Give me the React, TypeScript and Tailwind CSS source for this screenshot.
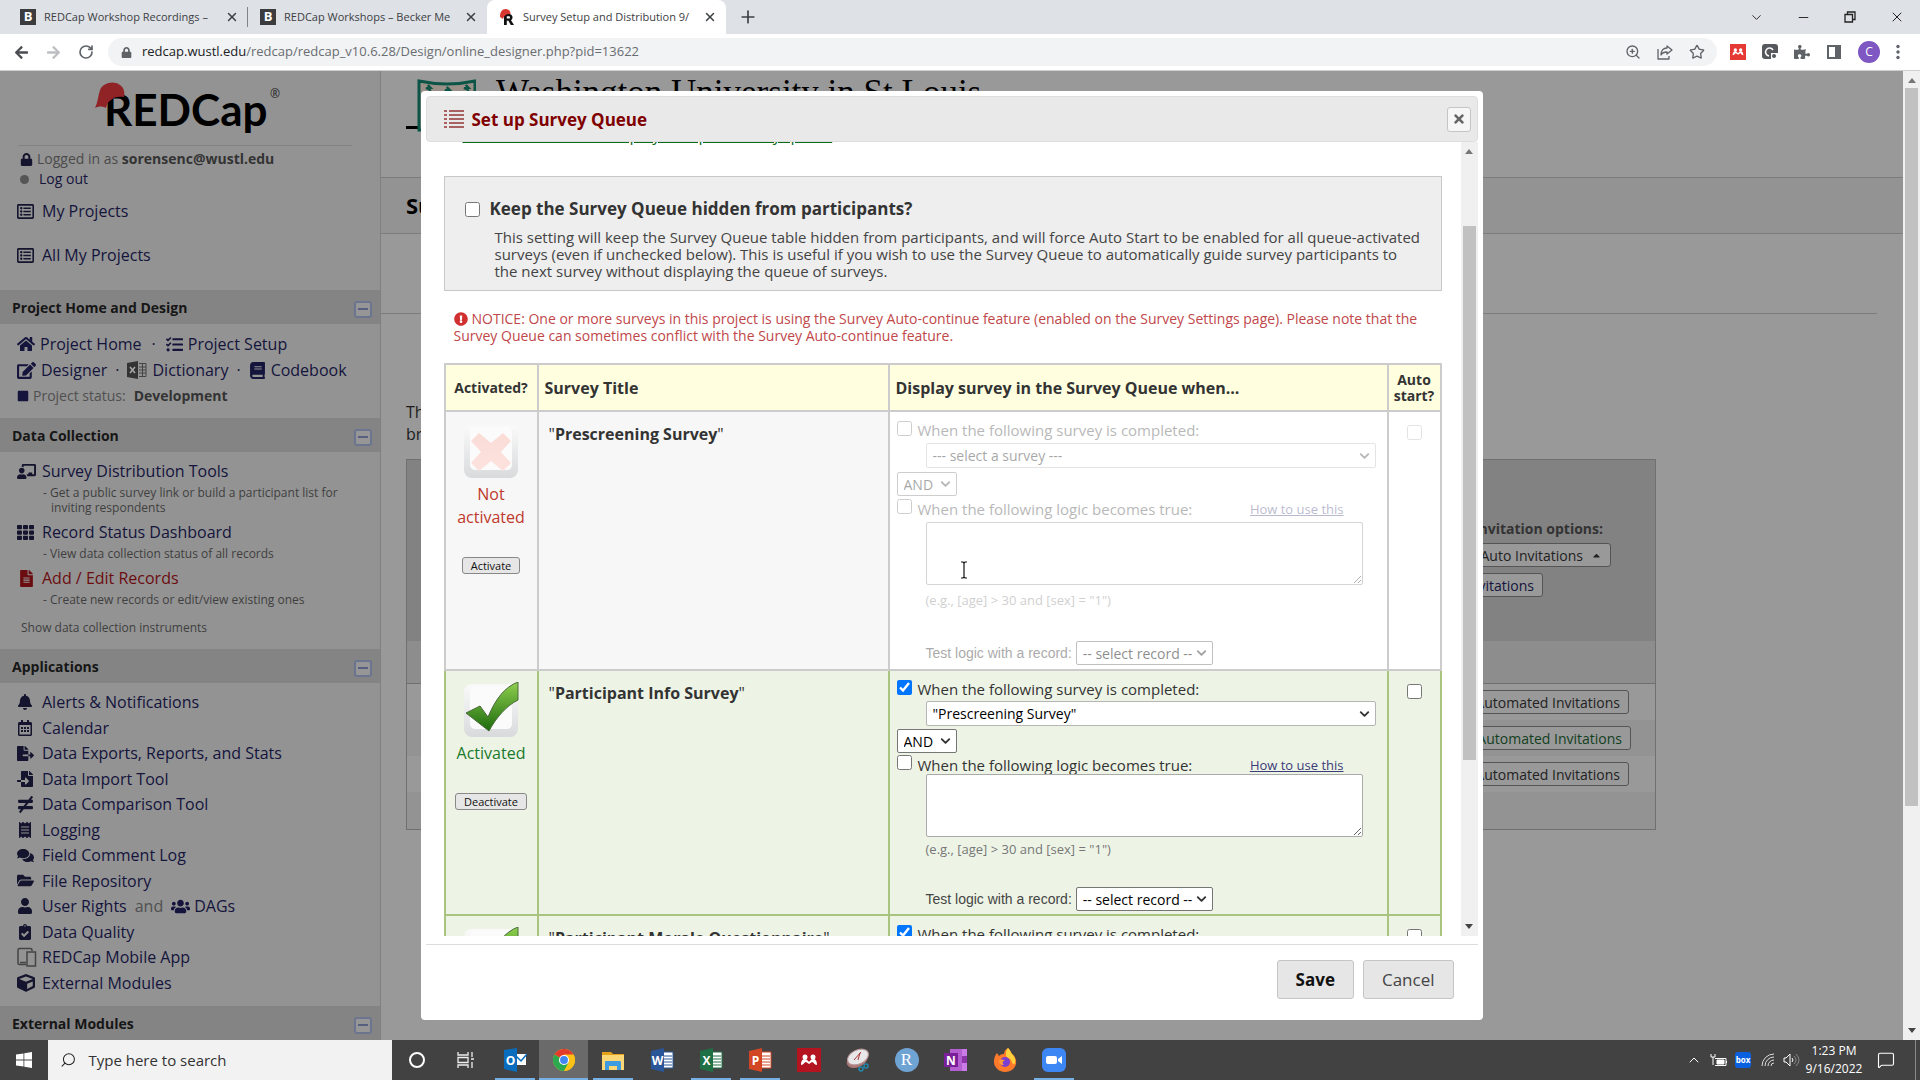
import React from "react";
import {
  FaArrowLeft, FaArrowRight, FaBell, FaBook, FaCaretUp, FaChalkboardTeacher, FaClipboardCheck, FaComments, FaCube, FaEdit,
  FaExclamationCircle, FaFileAlt, FaFileExport, FaFileImport, FaFolderOpen, FaHome, FaLock, FaNotEqual, FaPlus,
  FaPuzzlePiece, FaReceipt, FaRegCalendarAlt, FaRegListAlt, FaSquare, FaTasks, FaTh, FaTimes, FaUser, FaUsers,
} from "react-icons/fa";
import { ChevronDown, ChevronUp, Minus, MessageSquare, Plus, RotateCw, Search, Star, X, ZoomIn } from "lucide-react";

/* ---------- Browser frame ---------- */

function BeckerIcon() {
  return (
    <span className="flex h-4 w-4 shrink-0 items-center justify-center bg-[#3c3c3e] text-[13px] font-bold text-white">B</span>
  );
}

function RedCapIcon() {
  return (
    <svg viewBox="0 0 16 18" className="h-[18px] w-4 shrink-0">
      <path d="M5 6h5.5a3.4 3.4 0 0 1 1.5 6.2L15 17h-3.2l-2.4-4.2H7.8V17H5z M7.8 8.2v2.4h2c1.600 0 1.600-2.400 0-2.400z" fill="#111" fillRule="evenodd" />
      <path d="M1 9C1 4 3 1 6.500 1 10 1 11.500 3 11.500 6 8 5.500 5 7 4 11z" fill="#d9372f" />
    </svg>
  );
}

function Tab({ icon, title, active, divider }: { icon: React.ReactNode; title: string; active?: boolean; divider?: boolean }) {
  return (
    <div className={`flex h-full items-center ${divider ? "w-[248px] pl-5" : "w-[239px] pl-3"} ${active ? "rounded-t-lg bg-white" : ""}`}>
      {icon}
      <span className="ml-2 text-[11px] whitespace-nowrap text-[#3c4043]">{title}</span>
      <button aria-label="Close tab" className={`ml-auto text-[#3c4043] ${divider ? "mr-2" : "mr-[9px]"}`}><X size={14} strokeWidth={2.5} /></button>
      {divider && <span className="h-5 w-px bg-[#808389]" />}
    </div>
  );
}

function ShareIcon() {
  return (
    <svg viewBox="0 0 16 16" className="size-4" fill="none" stroke="currentColor" strokeWidth="1.300" strokeLinejoin="round">
      <path d="M1 5v10h11v-3" />
      <path d="M10 2l5 4-5 4V8c-3 0-5 1-6 3 0-4 2-7 6-7z" />
    </svg>
  );
}

function BrowserChrome() {
  return (
    <header className="shrink-0">
      <div className="flex h-[34px] items-center bg-[#dee1e6]">
        <Tab icon={<BeckerIcon />} title="REDCap Workshop Recordings –" divider />
        <Tab icon={<BeckerIcon />} title="REDCap Workshops – Becker Me" />
        <Tab icon={<RedCapIcon />} title="Survey Setup and Distribution 9/" active />
        <button aria-label="New tab" className="ml-3 text-[#3c4043]"><Plus size={20} /></button>
        <div className="ml-auto flex items-center gap-8 pr-[15px] text-[#222]">
          <ChevronDown size={15} strokeWidth={1.5} />
          <Minus size={15} strokeWidth={1.5} />
          <svg viewBox="0 0 14 14" className="size-[14px]" fill="none" stroke="currentColor" strokeWidth="1.300">
            <path d="M2 4.500h7.500V12H2z M4.500 4.500V2H12v7.500H9.500" />
          </svg>
          <X size={16} strokeWidth={1.5} />
        </div>
      </div>
      <div className="flex h-[37px] items-center border-b border-[#cfcfcf] bg-white text-[#5f6368]">
        <button aria-label="Back" className="ml-[14px]"><FaArrowLeft size={15} className="text-[#4a4d51]" /></button>
        <button aria-label="Forward" className="ml-[17px]"><FaArrowRight size={15} className="text-[#bdbfc2]" /></button>
        <button aria-label="Reload" className="ml-[17px]"><RotateCw size={16} strokeWidth={2.5} /></button>
        <div className="ml-[14px] flex h-7 flex-1 items-center rounded-full bg-[#f1f3f4] px-3">
          <FaLock size={11} className="ml-px" />
          <span className="ml-[10px] flex-1 text-[13px] text-[#6a6d72]">
            <span className="text-[#202124]">redcap.wustl.edu</span>/redcap/redcap_v10.6.28/Design/online_designer.php?pid=13622
          </span>
          <span className="flex items-center gap-4"><ZoomIn size={16} /><ShareIcon /><Star size={16} /></span>
        </div>
        <div className="flex items-center gap-4 pr-5 pl-[13px]">
          <MendeleyIcon small />
          <svg viewBox="0 0 16 16" className="size-4"><rect width="16" height="15" rx="3" fill="#55585c" /><path d="M11 6A4 4 0 1 0 7 12" fill="none" stroke="#fff" strokeWidth="1.500" /><path d="M9 9h7v6H9z" fill="#fff" /><circle cx="12" cy="12" r="2" fill="#55585c" /></svg>
          <FaPuzzlePiece size={16} />
          <svg viewBox="0 0 16 16" className="size-4"><path d="M1 1h14v14H1z M3 3v10h6V3z" fill="currentColor" fillRule="evenodd" /></svg>
          <span className="flex size-[22px] items-center justify-center rounded-full bg-[#7e57c2] text-[12px] text-white">C</span>
          <svg viewBox="0 0 4 16" className="h-4 w-1" fill="currentColor"><circle cx="2" cy="2.500" r="1.700" /><circle cx="2" cy="8" r="1.700" /><circle cx="2" cy="13.500" r="1.700" /></svg>
        </div>
      </div>
    </header>
  );
}

/* ---------- Sidebar ---------- */

function Logo() {
  return (
    <div className="relative ml-[104px] h-[54px] w-[176px]">
      <span className="font-['Lato'] text-[44px] leading-[54px] font-bold text-black">REDCap</span>
      <span className="absolute top-1 right-0 text-[12px] leading-4 text-[#222]">®</span>
      <svg viewBox="0 0 32 28" className="absolute top-0 -left-[9px] h-7 w-8">
        <path d="M0 26C3 20 3 14 5 8 8 1 18-2 25 3c4 3 5 7 4 12-6-1-10 0-13 3-3 2-4 4-5 8-4-2-7-2-11 0z" fill="#8f2326" />
      </svg>
    </div>
  );
}

function SectionHeader({ title }: { title: string }) {
  return (
    <div className="flex h-[34px] shrink-0 items-center justify-between bg-[#848484] pr-2 pl-3">
      <h2 className="text-[14px] font-bold text-[#161616]">{title}</h2>
      <button aria-label={`Collapse ${title}`} className="mt-1 flex h-[17px] w-[18px] items-center justify-center rounded-[3px] border-2 border-[#6c7590] bg-[#969696]">
        <span className="h-[2px] w-[10px] bg-[#565f80]" />
      </button>
    </div>
  );
}

function NavLink({ icon, children }: { icon: React.ReactNode; children: React.ReactNode }) {
  return (
    <a href="#" className="flex items-center text-[16px] leading-[22px] whitespace-nowrap text-[#14143c]">
      <span className="flex w-[25px] shrink-0 text-[#14142e]">{icon}</span>
      {children}
    </a>
  );
}

const apps: { icon: React.ReactNode; label: string }[] = [
  { icon: <FaBell size={16} />, label: "Alerts & Notifications" },
  { icon: <FaRegCalendarAlt size={16} />, label: "Calendar" },
  { icon: <FaFileExport size={17} />, label: "Data Exports, Reports, and Stats" },
  { icon: <FaFileImport size={16} />, label: "Data Import Tool" },
  { icon: <FaNotEqual size={17} />, label: "Data Comparison Tool" },
  { icon: <FaReceipt size={16} />, label: "Logging" },
  { icon: <FaComments size={17} />, label: "Field Comment Log" },
  { icon: <FaFolderOpen size={17} />, label: "File Repository" },
  { icon: <FaUser size={16} />, label: "User Rights" },
  { icon: <FaClipboardCheck size={16} />, label: "Data Quality" },
  { icon: <MobileIcon />, label: "REDCap Mobile App" },
  { icon: <FaCube size={18} />, label: "External Modules" },
];

function MobileIcon() {
  return (
    <svg viewBox="0 0 20 20" className="size-5" fill="none" stroke="#444" strokeWidth="1.500">
      <path d="M9 17.500H2.500q-1.500 0-1.500-1.500V3q0-1.500 1.500-1.500h11Q15 1.500 15 3v1M10 5h8.500v14H10z M3 15.500h6" />
    </svg>
  );
}

function ExcelGray() {
  return (
    <svg viewBox="0 0 20 18" className="h-[18px] w-5">
      <path d="M0 2l11-2v18L0 16z" fill="#333" />
      <path d="M12 2.500h7v13h-7 M12 6h7 M12 9h7 M12 12h7 M15.500 2.500v13" fill="none" stroke="#444" />
      <path d="M3 6l5 6 M8 6l-5 6" stroke="#aaa" strokeWidth="1.500" />
    </svg>
  );
}

function Note({ children }: { children: React.ReactNode }) {
  return <p className="mt-[3px] pl-[51px] -indent-2 text-[12px] leading-[15px] text-[#3f3f3f]">{children}</p>;
}

function Sidebar() {
  return (
    <nav className="flex w-[381px] shrink-0 flex-col border-r border-[#808080] bg-[#939393]">
      <div className="h-[219px] shrink-0 pt-[11px]">
        <Logo />
        <div className="mt-[9px] mr-7 ml-[18px] border-t border-[#828282]" />
        <div className="pt-[3px] pl-5 text-[14px] leading-5 text-[#4b4b4b]">
          <div className="flex items-center gap-1">
            <FaLock size={13} className="text-[#14142e]" />
            <span>Logged in as <b className="text-[#333]">sorensenc@wustl.edu</b></span>
          </div>
          <div className="flex items-center gap-[10px]">
            <span className="size-[9px] rounded-full bg-[#555]" />
            <a href="#" className="text-[#14143c]">Log out</a>
          </div>
        </div>
        <div className="flex flex-col gap-[22px] pt-[11px] pl-[17px]">
          <NavLink icon={<FaRegListAlt size={17} />}>My Projects</NavLink>
          <NavLink icon={<FaRegListAlt size={17} />}>All My Projects</NavLink>
        </div>
      </div>
      <SectionHeader title="Project Home and Design" />
      <div className="flex h-[94px] shrink-0 flex-col gap-1 pt-[9px] pl-[17px] text-[#14143c]">
        <div className="flex items-center gap-[10px] text-[16px] leading-[22px]">
          <a href="#" className="flex items-center gap-[5px]"><FaHome size={18} />Project Home</a>
          <span>·</span>
          <a href="#" className="flex items-center gap-[5px]"><FaTasks size={17} />Project Setup</a>
        </div>
        <div className="flex items-center gap-2 text-[16px] leading-[22px]">
          <a href="#" className="flex items-center gap-[5px]"><FaEdit size={19} />Designer</a>
          <span>·</span>
          <a href="#" className="flex items-center gap-[5px]"><ExcelGray />Dictionary</a>
          <span>·</span>
          <a href="#" className="flex items-center gap-[5px]"><FaBook size={17} />Codebook</a>
        </div>
        <div className="flex items-center gap-1 text-[14px] leading-[22px] text-[#505050]">
          <FaSquare size={12} className="text-[#14143c]" />Project status: <b className="ml-1 text-[#333]">Development</b>
        </div>
      </div>
      <SectionHeader title="Data Collection" />
      <div className="h-[197px] shrink-0 pt-2">
        <div className="pl-[17px]"><NavLink icon={<FaChalkboardTeacher size={19} />}>Survey Distribution Tools</NavLink></div>
        <Note>- Get a public survey link or build a participant list for inviting respondents</Note>
        <div className="pt-[6px] pl-[17px]"><NavLink icon={<FaTh size={17} />}>Record Status Dashboard</NavLink></div>
        <Note>- View data collection status of all records</Note>
        <div className="pt-[6px] pl-[20px]">
          <a href="#" className="flex items-center gap-[9px] text-[16px] leading-[22px] text-[#6b0d10]"><FaFileAlt size={17} className="w-[13px]" />Add / Edit Records</a>
        </div>
        <Note>- Create new records or edit/view existing ones</Note>
        <button className="mt-[13px] ml-[21px] text-[12px] leading-4 text-[#3f3f3f]">Show data collection instruments</button>
      </div>
      <SectionHeader title="Applications" />
      <ul className="flex min-h-0 flex-1 flex-col justify-between pt-2 pb-3 pl-[17px]">
        {apps.map((a) => (
          <li key={a.label} className="flex gap-2 text-[16px] leading-[22px] text-[#505050]">
            <NavLink icon={a.icon}>{a.label}</NavLink>
            {a.label === "User Rights" && (
              <>
                and
                <a href="#" className="flex items-center gap-1 text-[#14143c]"><FaUsers size={19} />DAGs</a>
              </>
            )}
          </li>
        ))}
      </ul>
      <SectionHeader title="External Modules" />
    </nav>
  );
}

/* ---------- Page behind the dialog ---------- */

function GrayButton({ children, tone }: { children: React.ReactNode; tone: string }) {
  return (
    <button className={`flex h-6 items-center gap-2 rounded-[3px] border border-[#555] bg-[#999] px-2 text-[14px] ${tone}`}>{children}</button>
  );
}

function PageBehind() {
  return (
    <main className="min-w-0 flex-1 bg-[#999]">
      <div className="flex h-[107px] gap-5 border-b border-[#7c7c7c] pt-2 pl-[25px]">
        <svg viewBox="0 0 70 60" className="h-[60px] w-[70px]">
          <path d="M0 47h14v3H0z" fill="#000" />
          <path d="M13 2q28 6 56 0v49H13z" fill="#9a9088" stroke="#0c5546" strokeWidth="3" />
          <path d="M22 6l2 5-4-2h5zM41 8l2 5-4-2h5zM60 6l2 5-4-2h5z" stroke="#0c5546" strokeWidth="2" />
        </svg>
        <p className="-mt-2 font-['Liberation_Serif'] text-[35px] leading-[44px] font-normal text-black">Washington University in St.Louis</p>
      </div>
      <h1 className="flex h-14 items-center border-b border-[#7c7c7c] bg-[#939393] pl-[25px] text-[22px] font-bold text-black">Survey</h1>
      <div className="mr-[26px] h-20 border-b border-[#7c7c7c]" />
      <p className="h-[145px] pt-[87px] pl-[25px] text-[16px] leading-[22px] text-[#1c1c1c]">
        The
        <br />
        browser.
      </p>
      <div className="mr-[247px] ml-[25px] border border-[#707070]">
        <div className="flex h-[181px] flex-col items-end bg-[#828282] pt-[58px] pr-[44px]">
          <p className="pr-2 text-[14px] leading-[22px] font-bold text-[#333]">Invitation options:</p>
          <div className="mt-[3px]"><GrayButton tone="text-[#222]">Auto Invitations <FaCaretUp size={11} /></GrayButton></div>
          <div className="mt-[6px] mr-[68px]"><GrayButton tone="text-[#14143c]">Invitations</GrayButton></div>
        </div>
        <div className="h-[43px] border-b border-[#707070] bg-[#8d8d8d]" />
        <div className="flex h-9 items-center justify-end pr-[26px]"><GrayButton tone="text-[#222]">Automated Invitations</GrayButton></div>
        <div className="flex h-9 items-center justify-end bg-[#939393] pr-6"><GrayButton tone="text-[#12401f]">Automated Invitations</GrayButton></div>
        <div className="flex h-9 items-center justify-end pr-[26px]"><GrayButton tone="text-[#222]">Automated Invitations</GrayButton></div>
        <div className="h-[37px] bg-[#939393]" />
      </div>
    </main>
  );
}

/* ---------- Dialog ---------- */

function Select({ id, label, value, className, border }: { id: string; label: string; value: string; className: string; border: string }) {
  return (
    <span className={`relative inline-flex ${className}`}>
      <select id={id} aria-label={label} defaultValue={value} className={`size-full appearance-none rounded-[2px] border bg-white pr-4 pl-[6px] text-[14px] text-black ${border}`}>
        <option>{value}</option>
      </select>
      <ChevronDown size={15} strokeWidth={3} className="pointer-events-none absolute top-1/2 right-1 -translate-y-1/2" />
    </span>
  );
}

function Check({ id, label, checked }: { id: string; label?: string; checked?: boolean }) {
  return <input id={id} type="checkbox" aria-label={label} defaultChecked={checked} className="m-0 size-[15px] shrink-0 accent-[#0075ff]" />;
}

function TextCursor() {
  return (
    <svg viewBox="0 0 8 18" className="absolute top-[39px] left-[34px] h-[18px] w-2" fill="none" stroke="#111" strokeWidth="1.200">
      <path d="M1 1h2l1 1 1-1h2M1 17h2l1-1 1 1h2M4 2v14" />
    </svg>
  );
}

function QueueIcon() {
  return (
    <svg viewBox="0 0 20 18" className="h-[18px] w-5" stroke="#a86262" strokeWidth="2">
      <path d="M0 1h3M5 1h15M0 5h3M5 5h15M0 9h3M5 9h15M0 13h3M5 13h15M0 17h3M5 17h15" />
    </svg>
  );
}

function Conditions({ id, survey, on }: { id: string; survey: string; on: boolean }) {
  const fade = on ? "" : "opacity-35";
  return (
    <div className={`pt-[9px] pl-[7px] ${on ? "pb-[3px]" : "pb-1"}`}>
      <div className={`flex items-start gap-[6px] ${fade} ${on ? "h-[21px]" : "h-[22px]"}`}>
        <Check id={`${id}-done`} checked={on} />
        <label htmlFor={`${id}-done`} className="text-[15px] leading-[19px]">When the following survey is completed:</label>
      </div>
      <Select id={`${id}-survey`} label="Survey" value={survey} border="border-[#b5b5b5]" className={`ml-[29px] h-[25px] w-[450px] ${fade}`} />
      <div className={`flex ${fade} ${on ? "mt-[3px]" : "mt-1"}`}>
        <Select id={`${id}-op`} label="Operator" value="AND" border="border-[#767676]" className="h-6 w-[60px]" />
      </div>
      <div className={`flex items-start gap-[6px] ${fade} ${on ? "mt-[2px] h-[19px]" : "mt-[3px] h-[23px]"}`}>
        <Check id={`${id}-true`} />
        <label htmlFor={`${id}-true`} className="text-[15px] leading-5">When the following logic becomes true:</label>
        <a href="#" className="mr-[43px] ml-auto text-[13px] leading-[21px] text-[#3c3c78] underline">How to use this</a>
      </div>
      <div className="relative ml-[29px] flex">
        <textarea aria-label="Logic" className={`h-[63px] w-[437px] resize rounded-[2px] border border-[#aaa] bg-white ${on ? "" : "opacity-50"}`} />
        {!on && <TextCursor />}
      </div>
      <p className={`ml-[29px] text-[13px] leading-4 text-[#777] ${fade} ${on ? "mt-1" : "mt-[7px]"}`}>(e.g., [age] &gt; 30 and [sex] = "1")</p>
      <div className={`ml-[29px] flex items-center gap-1 ${on ? "mt-[30px]" : "mt-[33px] opacity-45"}`}>
        <label htmlFor={`${id}-rec`} className="font-['Liberation_Sans'] text-[14px] text-[#444]">Test logic with a record:</label>
        <Select id={`${id}-rec`} label="Record" value="-- select record --" border="border-[#767676]" className="h-6 w-[137px]" />
      </div>
    </div>
  );
}

function StateIcon({ on }: { on: boolean }) {
  const g = on ? "tick-green" : "cross-red";
  return (
    <svg viewBox="0 0 56 56" className="mx-auto h-14 w-14">
      <defs>
        <linearGradient id={g} x1="0" y1="0" x2="0" y2="1"><stop offset="0" stopColor={on ? "#8fd04f" : "#fbdcd7"} /><stop offset="1" stopColor={on ? "#1c6a0c" : "#fce2de"} /></linearGradient>
        <linearGradient id={`${g}-b`} x1="0" y1="0" x2="0" y2="1"><stop offset="0" stopColor="#fafafa" /><stop offset="1" stopColor="#d8dadc" /></linearGradient>
      </defs>
      <rect x="1" y="2" width="54" height="53" rx="8" fill={`url(#${g}-b)`} />
      <rect x="7" y="4" width="42" height="43" rx="5" fill="#fbfbfb" />
      {on ? (
        <path d="M3 31l14-7 8 11C33 16 42 5 55 0v18C43 24 33 36 26 49z" fill={`url(#${g})`} stroke="#4c6a3c" />
      ) : (
        <path d="M16 10l12 10 12-10 8 8-10 11 10 11-8 8-12-10-12 10-8-8 10-11L8 18z" fill={`url(#${g})`} />
      )}
    </svg>
  );
}

function SurveyRow({ id, title, survey, on }: { id: string; title: string; survey: string; on: boolean }) {
  const cell = on ? "border-2 border-[#a9c47f] bg-[#edf4e6] align-top" : "border-2 border-[#ccc] align-top";
  return (
    <tr>
      <td className={`${cell} text-center ${on ? "" : "bg-[#f7f7f7]"}`}>
        <div className="flex flex-col items-center pt-[11px]">
          <StateIcon on={on} />
          <span className={`mt-1 text-[16px] leading-[23px] ${on ? "text-[#1a7a2a]" : "text-[#c0392b]"}`}>{on ? "Activated" : "Not activated"}</span>
          <button className="mt-7 rounded-[3px] border border-[#888] bg-[#e6e6e6] px-2 text-[11px] leading-[15px] text-[#111]">{on ? "Deactivate" : "Activate"}</button>
        </div>
      </td>
      <td className={`${cell} pt-[10px] pl-[10px] text-[16px] ${on ? "" : "bg-[#f7f7f7]"}`}>"<b>{title}</b>"</td>
      <td className={cell}><Conditions id={id} survey={survey} on={on} /></td>
      <td className={`${cell} text-center`}>
        <div className={`flex justify-center pt-[13px] ${on ? "" : "opacity-20"}`}><Check id={`${id}-auto`} label={`Auto start ${title}`} /></div>
      </td>
    </tr>
  );
}

function Dialog() {
  return (
    <section role="dialog" aria-label="Set up Survey Queue" className="flex h-full w-full max-w-[1062px] flex-col rounded-[4px] bg-white p-[5px] text-[#333]">
      <div className="flex h-[46px] shrink-0 items-center rounded-[4px] border border-[#ddd] bg-[#e9e9e9] pr-[6px] pl-[17px]">
        <QueueIcon />
        <h2 className="ml-2 flex-1 pt-px text-[17px] font-bold text-[#800000]">Set up Survey Queue</h2>
        <button aria-label="Close" className="flex h-[25px] w-6 items-center justify-center rounded-[3px] border border-[#c5c5c5] bg-[#f6f6f6] text-[#666]"><FaTimes size={14} /></button>
      </div>
      <div className="flex min-h-0 flex-1">
        <div className="min-w-0 flex-1 overflow-hidden pr-[19px] pl-[18px]">
          <a href="#" className="-mt-[19px] flex items-center gap-px pl-[10px] text-[16px] leading-6 text-[#0a6b1a]">
            <FaPlus size={8} /><span className="underline">Add custom text to display at top of survey queue</span>
          </a>
          <div className="mt-[29px] h-[115px] border border-[#c8c8c8] bg-[#eee] pt-[21px] pl-5">
            <div className="flex items-center gap-[10px]">
              <Check id="hide-queue" />
              <label htmlFor="hide-queue" className="text-[17px] leading-[22px] font-bold">Keep the Survey Queue hidden from participants?</label>
            </div>
            <p className="mt-[9px] pr-5 pl-[30px] text-[15px] leading-[17px] text-[#444]">
              This setting will keep the Survey Queue table hidden from participants, and will force Auto Start to be enabled for all queue-activated surveys (even if unchecked below). This is useful if you wish to use the Survey Queue to automatically guide survey participants to the next survey without displaying the queue of surveys.
            </p>
          </div>
          <p className="mt-[19px] px-[10px] text-[14px] leading-[17px] text-[#c0474a]">
            <FaExclamationCircle size={14} className="mr-1 inline-block align-[-2px] text-[#d03030]" />
            NOTICE: One or more surveys in this project is using the Survey Auto-continue feature (enabled on the Survey Settings page). Please note that the Survey Queue can sometimes conflict with the Survey Auto-continue feature.
          </p>
          <table className="mt-[19px] w-full table-fixed border-collapse">
            <thead>
              <tr className="h-[47px] bg-[#ffffe0] text-left text-[16px] leading-4">
                <th className="w-[93px] border-2 border-[#ccc] text-center text-[14px]">Activated?</th>
                <th className="w-[351px] border-2 border-[#ccc] pl-[6px]">Survey Title</th>
                <th className="border-2 border-[#ccc] pl-[6px]">Display survey in the Survey Queue when...</th>
                <th className="w-[53px] border-2 border-[#ccc] text-center text-[14px]">Auto start?</th>
              </tr>
            </thead>
            <tbody>
              <SurveyRow id="pre" title="Prescreening Survey" survey="--- select a survey ---" on={false} />
              <SurveyRow id="info" title="Participant Info Survey" survey={'"Prescreening Survey"'} on />
              <SurveyRow id="morale" title="Participant Morale Questionnaire" survey={'"Participant Info Survey"'} on />
            </tbody>
          </table>
        </div>
        <Scrollbar thumb="mt-[84px] h-[534px]" width="w-[17px]" />
      </div>
      <div className="mt-2 flex h-[71px] shrink-0 justify-end gap-[9px] border-t border-[#ddd] pt-[15px] pr-6">
        <button className="h-[39px] rounded-[3px] border border-[#c5c5c5] bg-[#e6e6e6] px-[18px] text-[17px] font-bold text-[#111]">Save</button>
        <button className="h-[39px] rounded-[3px] border border-[#c5c5c5] bg-[#e6e6e6] px-[18px] text-[17px] text-[#444]">Cancel</button>
      </div>
    </section>
  );
}

function Scrollbar({ thumb, width }: { thumb: string; width: string }) {
  return (
    <div className={`relative flex shrink-0 flex-col items-center bg-[#f0f0f0] ${width}`}>
      <svg viewBox="0 0 8 5" className="absolute top-[7px] h-[5px] w-2"><path d="M0 5l4-5 4 5z" fill="#777" /></svg>
      <div className={`w-[13px] bg-[#c1c1c1] ${thumb}`} />
      <svg viewBox="0 0 8 5" className="absolute bottom-[7px] h-[5px] w-2"><path d="M0 0l4 5 4-5z" fill="#444" /></svg>
    </div>
  );
}

/* ---------- Taskbar ---------- */

function MendeleyIcon({ small }: { small?: boolean }) {
  return (
    <svg viewBox="0 0 24 24" className={small ? "size-4" : "size-6"}>
      <path d="M0 0h24v24H0z" fill={small ? "#e53935" : "#b3141f"} />
      <circle cx="8" cy="9" r="2.500" fill="#fff" /><circle cx="16" cy="9" r="2.500" fill="#fff" />
      <path d="M4 17c0-5 2-6 4-6s3 2 4 3c1-1 2-3 4-3s4 1 4 6c-3 0-3-3-5-3l-3 2-3-2c-2 0-2 3-5 3z" fill="#fff" />
    </svg>
  );
}

function OfficeIcon({ letter, color }: { letter: string; color: string }) {
  return (
    <svg viewBox="0 0 24 24" className="size-6">
      <path d="M12 4h11v16H12z" fill="#fff" stroke={color} />
      <path d="M14 8h8M14 11h8M14 14h8M14 17h8" stroke={color} />
      <path d="M1 3l13-3v24L1 21z" fill={color} />
      <text x="7.500" y="16.500" textAnchor="middle" fontSize="12" fontWeight="bold" fill="#fff">{letter}</text>
    </svg>
  );
}

function OutlookIcon() {
  return (
    <svg viewBox="0 0 24 24" className="size-6">
      <path d="M12 6h11v11H12z" fill="#fff" /><path d="M13 8l5 5 6-7" fill="none" stroke="#0a6cbd" strokeWidth="1.500" />
      <path d="M1 2l13-2v24L1 21z" fill="#0a6cbd" />
      <text x="7.500" y="16.500" textAnchor="middle" fontSize="12" fontWeight="bold" fill="#fff">O</text>
    </svg>
  );
}

function ChromeIcon() {
  return (
    <svg viewBox="0 0 24 24" className="size-[22px]">
      <circle cx="12" cy="12" r="12" fill="#fbc116" />
      <path d="M12 12L1.600 6A12 12 0 0 1 22.400 6H12z" fill="#e33b2e" />
      <path d="M12 12L1.600 6A12 12 0 0 0 12 24l5.200-9z" fill="#2da94f" />
      <path d="M12 6.600h10.700A12 12 0 0 1 12 24l5-9z" fill="#fbc116" />
      <circle cx="12" cy="12" r="5.500" fill="#fff" /><circle cx="12" cy="12" r="4.300" fill="#4285f4" />
    </svg>
  );
}

function ExplorerIcon() {
  return (
    <svg viewBox="0 0 24 24" className="size-6">
      <path d="M1 4h9l2 2h11v4H1z" fill="#e3a21a" /><path d="M1 7h22v15H1z" fill="#fbd775" />
      <path d="M4 22v-8q0-1 1-1h14q1 0 1 1v8h-4v-4H8v4z" fill="#3f9be0" />
    </svg>
  );
}

function SnipIcon() {
  return (
    <svg viewBox="0 0 24 24" className="size-6">
      <ellipse cx="12" cy="12" rx="11" ry="7" transform="rotate(-25 12 14)" fill="#a77" />
      <ellipse cx="12" cy="9" rx="11" ry="7" transform="rotate(-25 12 9)" fill="#e8e8ea" stroke="#b99" />
      <path d="M8 12l7-8M12 12l2-7" stroke="#a33" />
      <circle cx="15" cy="21" r="2" fill="none" stroke="#28a" strokeWidth="1.500" /><circle cx="20" cy="18" r="2" fill="none" stroke="#28a" strokeWidth="1.500" />
    </svg>
  );
}

function RIcon() {
  return <span className="flex size-6 items-center justify-center rounded-full bg-[#6fa3d4] font-['Liberation_Serif'] text-[17px] text-white">R</span>;
}

function OneNoteIcon() {
  return (
    <svg viewBox="0 0 24 24" className="size-6">
      <path d="M6 1h17v22H6z" fill="#b35fd0" /><path d="M18 1h5v22h-5z" fill="#ca7be8" /><path d="M18 8h5v7h-5z" fill="#8b35a8" />
      <path d="M0 5h14v14H0z" fill="#7a1e99" />
      <text x="7" y="16.500" textAnchor="middle" fontSize="12" fontWeight="bold" fill="#fff">N</text>
    </svg>
  );
}

function FirefoxIcon() {
  return (
    <svg viewBox="0 0 24 24" className="size-6">
      <path d="M15 0c3 3 3 5 4 6 2 1 5 5 4 10-1 5-6 8-11 8S1 20 1 14C1 9 3 6 4 5l2 3c2-2 4-2 5-2 0-3 2-5 4-6z" fill="#ff7a2b" />
      <path d="M15 0c3 3 3 5 4 6 2 2 4 5 3 9-1 3-3 0-4-3-1-2-5-2-5-5s0-5 2-7z" fill="#ffd23d" />
      <circle cx="12" cy="14" r="5" fill="#7a3fd1" /><path d="M6 12c3-1 5 0 6 1-3 0-3 2-1 4-4 0-5-2-5-5z" fill="#ff9c33" />
    </svg>
  );
}

function ZoomAppIcon() {
  return (
    <svg viewBox="0 0 24 24" className="size-6">
      <rect width="24" height="24" rx="6" fill="#3d87f5" /><rect x="4" y="8" width="11" height="8" rx="2" fill="#fff" /><path d="M16 11l4-3v8l-4-3z" fill="#fff" />
    </svg>
  );
}

function TaskViewIcon() {
  return (
    <svg viewBox="0 0 18 18" className="size-[18px]" fill="none" stroke="#eee" strokeWidth="1.300">
      <path d="M1 1v3h10V1M1 17v-3h10v3M1 6.500h10v5H1zM15 1v5M15 11v6M14 8h3" />
    </svg>
  );
}

const tasks: { name: string; icon: React.ReactNode; open?: boolean; active?: boolean }[] = [
  { name: "Cortana", icon: <span className="size-4 rounded-full border-2 border-white" /> },
  { name: "Task View", icon: <TaskViewIcon /> },
  { name: "Outlook", icon: <OutlookIcon />, open: true },
  { name: "Chrome", icon: <ChromeIcon />, open: true, active: true },
  { name: "File Explorer", icon: <ExplorerIcon />, open: true },
  { name: "Word", icon: <OfficeIcon letter="W" color="#2a5699" /> },
  { name: "Excel", icon: <OfficeIcon letter="X" color="#1f7145" />, open: true },
  { name: "PowerPoint", icon: <OfficeIcon letter="P" color="#d24625" />, open: true },
  { name: "Mendeley", icon: <MendeleyIcon /> },
  { name: "Snipping Tool", icon: <SnipIcon /> },
  { name: "R", icon: <RIcon /> },
  { name: "OneNote", icon: <OneNoteIcon /> },
  { name: "Firefox", icon: <FirefoxIcon /> },
  { name: "Zoom", icon: <ZoomAppIcon />, open: true },
];

function Taskbar() {
  return (
    <footer className="flex h-10 shrink-0 items-center bg-[#424242] text-white">
      <button aria-label="Start" className="flex w-12 justify-center">
        <svg viewBox="0 0 16 16" className="size-4" fill="#fff"><path d="M0 2.500L7.500 1.400v6.200H0zM8.300 1.300L16 0v7.600H8.300zM0 8.400h7.500v6.200L0 13.500zM8.300 8.400H16V16L8.300 14.800z" /></svg>
      </button>
      <label className="flex h-full w-[344px] items-center gap-3 bg-[#f2f2f2] pl-3 text-[#222]">
        <Search size={18} strokeWidth={1.5} className="-scale-x-100" />
        <input aria-label="Search" placeholder="Type here to search" className="w-full bg-transparent text-[15px] outline-none placeholder:text-[#333]" />
      </label>
      {tasks.map((t) => (
        <button key={t.name} aria-label={t.name} className={`relative flex h-full w-[49px] items-center justify-center ${t.active ? "bg-[#6a6a6a]" : ""}`}>
          {t.icon}
          {t.open && <span className={`absolute bottom-0 h-[2px] bg-[#76b0e4] ${t.active ? "w-full" : "w-10"}`} />}
        </button>
      ))}
      <div className="ml-auto flex h-full items-center">
        <ChevronUp size={16} strokeWidth={1.5} />
        <svg viewBox="0 0 18 14" className="ml-2 h-[14px] w-[18px]" fill="none" stroke="#fff"><path d="M5 5.500h11v7H5M16.500 8v2M1 1v3h4V1M3 4v8" /><path d="M7 7h7v4H7z" fill="#fff" /></svg>
        <span className="ml-[7px] flex size-4 items-center justify-center rounded-[3px] bg-[#0a61e0] text-[8px] font-bold">box</span>
        <svg viewBox="0 0 14 14" className="ml-[10px] size-[14px]" fill="none" stroke="#ddd"><path d="M1 13A12 12 0 0 1 13 1M4 13a9 9 0 0 1 9-9M7 13a6 6 0 0 1 6-6M10 13a3 3 0 0 1 3-3" /></svg>
        <svg viewBox="0 0 18 14" className="ml-2 h-[14px] w-[18px]" fill="none" stroke="#fff"><path d="M1 5h2l4-4v12L3 9H1zM9 5q2 2 0 4" /><path d="M11 3q4 4 0 8M13 1q6 6 0 12" stroke="#888" /></svg>
        <div className="ml-[3px] w-[60px] text-center text-[12px] leading-[18px]">
          <div>1:23 PM</div>
          <div>9/16/2022</div>
        </div>
        <MessageSquare size={18} strokeWidth={1.5} className="mr-5 ml-[13px]" />
        <span className="mr-1 h-full w-px bg-[#888]" />
      </div>
    </footer>
  );
}

export default function App() {
  return (
    <div className="flex h-screen flex-col overflow-hidden font-['Open_Sans',sans-serif]">
      <BrowserChrome />
      <div className="flex min-h-0 flex-1">
        <div className="relative flex min-w-0 flex-1 overflow-hidden">
          <Sidebar />
          <PageBehind />
          <div className="absolute inset-0 flex justify-center py-5">
            <Dialog />
          </div>
        </div>
        <Scrollbar thumb="mt-[17px] h-[718px]" width="w-[17px]" />
      </div>
      <Taskbar />
    </div>
  );
}
